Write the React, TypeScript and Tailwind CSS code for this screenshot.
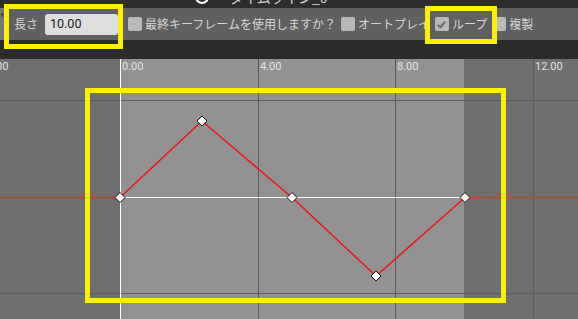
import React from "react";

const jp = { fontFamily: '"Noto Sans CJK JP", "Noto Sans", sans-serif' };

function Check({ checked = false }: { checked?: boolean }) {
  return (
    <span className="flex h-[14px] w-[14px] shrink-0 items-center justify-center rounded-[2px] bg-[#b9b9b9]">
      {checked && (
        <svg width="11" height="11" viewBox="0 0 12 12">
          <path d="M2 6.5 L4.8 9 L10 3" fill="none" stroke="#6b6b6b" strokeWidth="2.2" />
        </svg>
      )}
    </span>
  );
}

function Option({ label, checked }: { label: string; checked?: boolean }) {
  return (
    <div className="flex items-center gap-[3px]">
      <Check checked={checked} />
      <span className="whitespace-nowrap text-[12px] text-[#d6d6d6]">{label}</span>
    </div>
  );
}

const X0 = 120;
const PX = 34.4;
const ticks = [-4, 0, 4, 8, 12];
const keys: [number, number][] = [
  [120, 138.5],
  [202, 62],
  [292, 138.5],
  [376, 217],
  [465, 138.5],
];

function Timeline() {
  return (
    <div className="relative h-[260px] w-full overflow-hidden bg-[#6f6f6f]">
      <svg width="578" height="260" className="absolute left-0 top-0">
        <rect x="120" y="0" width="344" height="260" fill="#929292" />
        {[41, 234].map((y) => (
          <line key={y} x1="0" x2="578" y1={y + 0.5} y2={y + 0.5} stroke="#5c5c5c" />
        ))}
        {ticks
          .filter((t) => t !== 0)
          .map((t) => {
            const x = Math.round(X0 + t * PX) + 0.5;
            return <line key={t} x1={x} x2={x} y1="0" y2="260" stroke="#5a5a5a" />;
          })}
        <line x1="120.5" x2="120.5" y1="0" y2="260" stroke="#ffffff" />
        <line x1="0" x2="120" y1="138.5" y2="138.5" stroke="#ff2020" strokeWidth="1.5" />
        <line x1="120" x2="465" y1="138.5" y2="138.5" stroke="#ffffff" />
        <line x1="465" x2="578" y1="138.5" y2="138.5" stroke="#ff2a2a" strokeWidth="1.5" />
        <polyline
          points={keys.map(([x, y]) => `${x},${y}`).join(" ")}
          fill="none"
          stroke="#f01414"
          strokeWidth="1.5"
        />
        {keys.map(([x, y]) => (
          <path
            key={x}
            d={`M${x} ${y - 5} L${x + 5} ${y} L${x} ${y + 5} L${x - 5} ${y} Z`}
            fill="#ffffff"
            stroke="#111111"
            strokeWidth="1"
          />
        ))}
      </svg>
      {ticks.map((t) => (
        <span
          key={t}
          className="absolute top-[2px] text-[11px] leading-none text-[#e4e4e4]"
          style={{ left: Math.round(X0 + t * PX) + 2, fontFamily: "Roboto, sans-serif" }}
        >
          {t.toFixed(2)}
        </span>
      ))}
    </div>
  );
}

export default function App() {
  return (
    <div className="relative h-[319px] w-[578px] overflow-hidden bg-[#2b2b2b]" style={jp}>
      <div className="relative h-[8px] overflow-hidden bg-[#2d2d2d]">
        <div className="absolute left-[195px] top-[-10px] flex items-center gap-[20px]">
          <span className="h-[14px] w-[14px] rounded-full border-2 border-white" />
          <span className="text-[14px] leading-[14px] text-[#cfcfcf]">タイムライン_0</span>
        </div>
      </div>
      <div className="flex h-[32px] items-center bg-[#606060]">
        <div className="flex h-full w-[4px] items-start bg-[#767676] pt-[2px] text-[9px] leading-none text-[#222]">+</div>
        <span className="ml-[10px] text-[12px] text-[#d6d6d6]">長さ</span>
        <div className="ml-[7px] flex h-[21px] w-[73px] items-center rounded-[3px] bg-[#dedede] pl-[5px] text-[12.5px] text-[#1a1a1a]" style={{ fontFamily: "Roboto, sans-serif" }}>
          10.00
        </div>
        <div className="ml-[10px] flex items-center gap-[5px]">
          <Option label="最終キーフレームを使用しますか？" />
          <Option label="オートプレイ" />
          <Option label="ループ" checked />
          <Option label="複製" />
        </div>
      </div>
      <div className="h-[19px] bg-[#2b2b2b]" />
      <Timeline />

      <div className="pointer-events-none absolute left-[4px] top-[4px] h-[45px] w-[119px] border-[5px] border-[#ffef00]" />
      <div className="pointer-events-none absolute left-[425px] top-[6px] h-[38px] w-[72px] border-[5px] border-[#ffef00]" />
      <div className="pointer-events-none absolute left-[85px] top-[88px] h-[215px] w-[421px] border-[5px] border-[#ffef00]" />
    </div>
  );
}
